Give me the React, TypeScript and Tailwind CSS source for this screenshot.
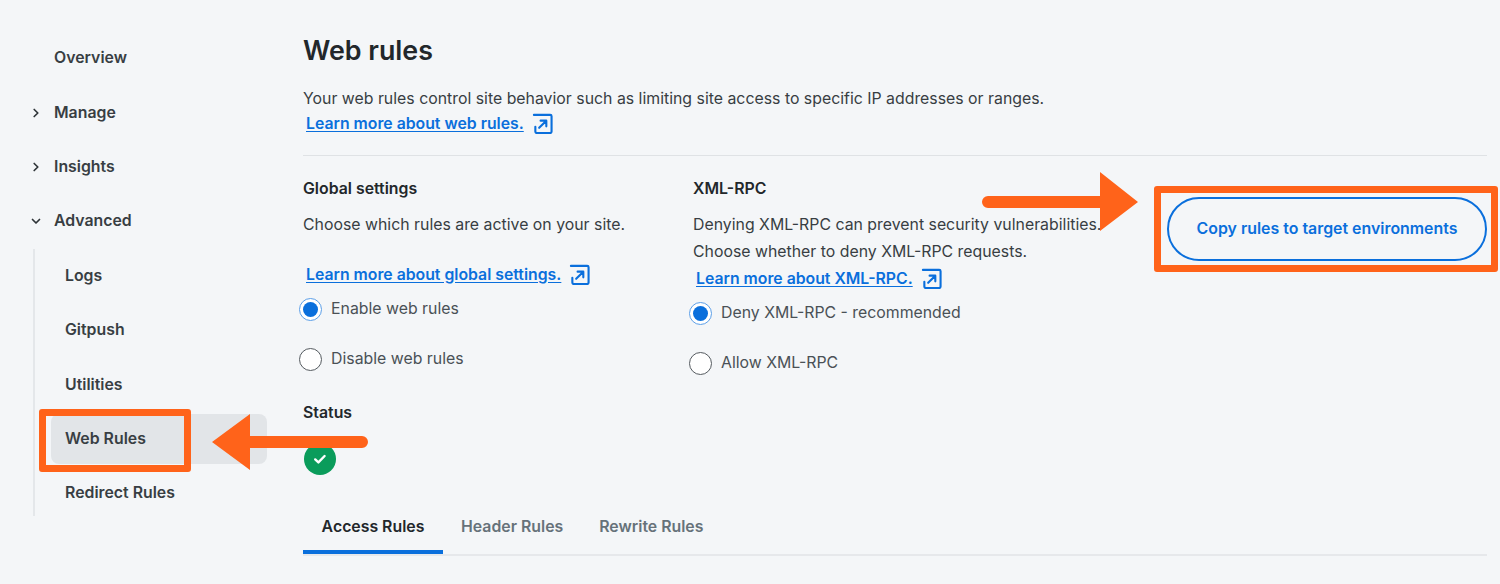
import React from "react";

const font = { fontFamily: "Inter, 'Liberation Sans', sans-serif" };

function Chevron({ down }: { down?: boolean }) {
  return (
    <svg width="10" height="10" viewBox="0 0 10 10" fill="none" stroke="#2e3438" strokeWidth="1.7" strokeLinecap="round" strokeLinejoin="round">
      {down ? <path d="M1.5 3.5 5 7l3.5-3.5" /> : <path d="M3.2 1.5 6.8 5 3.2 8.5" />}
    </svg>
  );
}

function ExternalIcon() {
  return (
    <svg width="21" height="21" viewBox="0 0 22 22" fill="none" stroke="#0a6fdc" strokeWidth="2.2" strokeLinecap="round" strokeLinejoin="round">
      <path d="M2 2H19a1.5 1.5 0 0 1 1.5 1.5v16a1.5 1.5 0 0 1-1.5 1.5H5A1.5 1.5 0 0 1 3.5 19.5v-5" />
      <path d="M7.5 15.5 15 8M9 8h6V14" />
    </svg>
  );
}

function DocLink({ children }: { children: React.ReactNode }) {
  return (
    <a className="flex items-center gap-[8px] pl-[3px] text-[#0a6fdc] text-[15.8px] font-semibold underline underline-offset-2">
      <span>{children}</span>
      <ExternalIcon />
    </a>
  );
}

function Radio({ on, label }: { on?: boolean; label: string }) {
  return (
    <div className="flex items-center gap-[9px] -ml-[4px] h-[24px] text-[15.85px] text-[#4a5156]">
      {on ? (
        <span className="w-[23px] h-[23px] rounded-full border-[1.5px] border-[#5c9fe8] bg-white flex items-center justify-center">
          <span className="w-[15px] h-[15px] rounded-full bg-[#0a6fdc]" />
        </span>
      ) : (
        <span className="w-[23px] h-[23px] rounded-full border-[1.5px] border-[#555b60] bg-white" />
      )}
      <span>{label}</span>
    </div>
  );
}

function NavItem({ label, chevron }: { label: string; chevron?: "right" | "down" }) {
  return (
    <div className="h-[54.4px] flex items-center text-[15.85px] font-semibold text-[#383e43]">
      <span className="w-[54px] pl-[31px] flex items-center">
        {chevron ? <Chevron down={chevron === "down"} /> : null}
      </span>
      <span>{label}</span>
    </div>
  );
}

function SubItem({ label, active }: { label: string; active?: boolean }) {
  return (
    <div className="h-[54.4px] flex items-center">
      <div className={"h-[50px] w-[216px] flex items-center pl-[14px] rounded-[8px] text-[15.85px] font-semibold text-[#383e43] " + (active ? "bg-[#e2e5e8]" : "")}>
        {label}
      </div>
    </div>
  );
}

export default function App() {
  return (
    <div style={font} className="relative w-[1500px] h-[584px] overflow-hidden bg-[#f4f6f8] flex">
      <aside className="w-[303px] shrink-0 pt-[31px]">
        <NavItem label="Overview" />
        <NavItem label="Manage" chevron="right" />
        <NavItem label="Insights" chevron="right" />
        <NavItem label="Advanced" chevron="down" />
        <div className="ml-[33px] mt-[2px] pl-[16px] border-l-2 border-[#e4e7ea] h-[267px]">
          <div className="-mt-[2px]">
            <SubItem label="Logs" />
            <SubItem label="Gitpush" />
            <SubItem label="Utilities" />
            <SubItem label="Web Rules" active />
            <SubItem label="Redirect Rules" />
          </div>
        </div>
      </aside>

      <main className="w-[1184px] shrink-0 pt-[33px]">
        <h1 className="text-[26.8px] leading-[34px] font-semibold text-[#22272b]">Web rules</h1>
        <p className="mt-[20px] text-[15.85px] leading-[24px] text-[#383e43]">
          Your web rules control site behavior such as limiting site access to specific IP addresses or ranges.
        </p>
        <div className="mt-[1px]">
          <DocLink>Learn more about web rules.</DocLink>
        </div>
        <div className="mt-[19px] h-px bg-[#dfe2e5]" />

        <div className="flex mt-[21px]">
          <section className="w-[390px] shrink-0">
            <h2 className="text-[15.85px] leading-[24px] font-semibold text-[#22272b]">Global settings</h2>
            <p className="mt-[12px] text-[15.85px] leading-[24px] text-[#383e43]">Choose which rules are active on your site.</p>
            <div className="mt-[26px]">
              <DocLink>Learn more about global settings.</DocLink>
            </div>
            <div className="mt-[11px] flex flex-col gap-[26px]">
              <Radio on label="Enable web rules" />
              <Radio label="Disable web rules" />
            </div>
            <h2 className="mt-[30px] text-[15.85px] leading-[24px] font-semibold text-[#22272b]">Status</h2>
            <div className="mt-[18px] ml-[1px] w-[32px] h-[32px] rounded-full bg-[#0a9c5b] flex items-center justify-center">
              <svg width="16" height="16" viewBox="0 0 16 16" fill="none" stroke="#fff" strokeWidth="2.4" strokeLinecap="round" strokeLinejoin="round">
                <path d="M3.2 8.4 6.4 11.4 12.6 5" />
              </svg>
            </div>
          </section>

          <section className="w-[420px] shrink-0">
            <h2 className="text-[15.85px] leading-[24px] font-semibold text-[#22272b]">XML-RPC</h2>
            <p className="mt-[10px] text-[15.85px] leading-[27px] text-[#383e43] whitespace-nowrap">
              Denying XML-RPC can prevent security vulnerabilities.
              <br />
              Choose whether to deny XML-RPC requests.
            </p>
            <div className="mt-[2px]">
              <DocLink>Learn more about XML-RPC.</DocLink>
            </div>
            <div className="mt-[11px] flex flex-col gap-[26px]">
              <Radio on label="Deny XML-RPC - recommended" />
              <Radio label="Allow XML-RPC" />
            </div>
          </section>

          <div className="ml-auto mt-[20px]">
            <button className="w-[320px] h-[64px] rounded-full border-2 border-[#0a6fdc] text-[#0a6fdc] text-[15.9px] font-semibold">
              Copy rules to target environments
            </button>
          </div>
        </div>

        <div className="mt-[32px] flex border-b-2 border-[#e6e8eb] h-[49px] text-[15.85px] font-semibold">
          <div className="w-[140px] h-[47px] flex items-start justify-center pt-[8px] border-b-4 border-[#0a6fdc] text-[#22272b]">Access Rules</div>
          <div className="ml-[18px] pt-[8px] text-[#66727a]">Header Rules</div>
          <div className="ml-[36px] pt-[8px] text-[#66727a]">Rewrite Rules</div>
        </div>
      </main>

      {/* Annotations over the screenshot */}
      <div className="absolute left-[39px] top-[409px] w-[152px] h-[63px] border-[7px] border-[#ff631a] rounded-[3px]" />
      <div className="absolute left-[1154px] top-[186px] w-[344px] h-[86px] border-[7px] border-[#ff631a] rounded-[3px]" />
      <svg className="absolute left-[205px] top-[410px]" width="170" height="64" viewBox="0 0 170 64">
        <path d="M7 32 45 4v22h112a6 6 0 0 1 0 12H45v22z" fill="#ff631a" />
      </svg>
      <svg className="absolute left-[975px] top-[168px]" width="170" height="68" viewBox="0 0 170 68">
        <path d="M163 34 125 4v24H13a6 6 0 0 0 0 12h112v23z" fill="#ff631a" />
      </svg>
    </div>
  );
}
